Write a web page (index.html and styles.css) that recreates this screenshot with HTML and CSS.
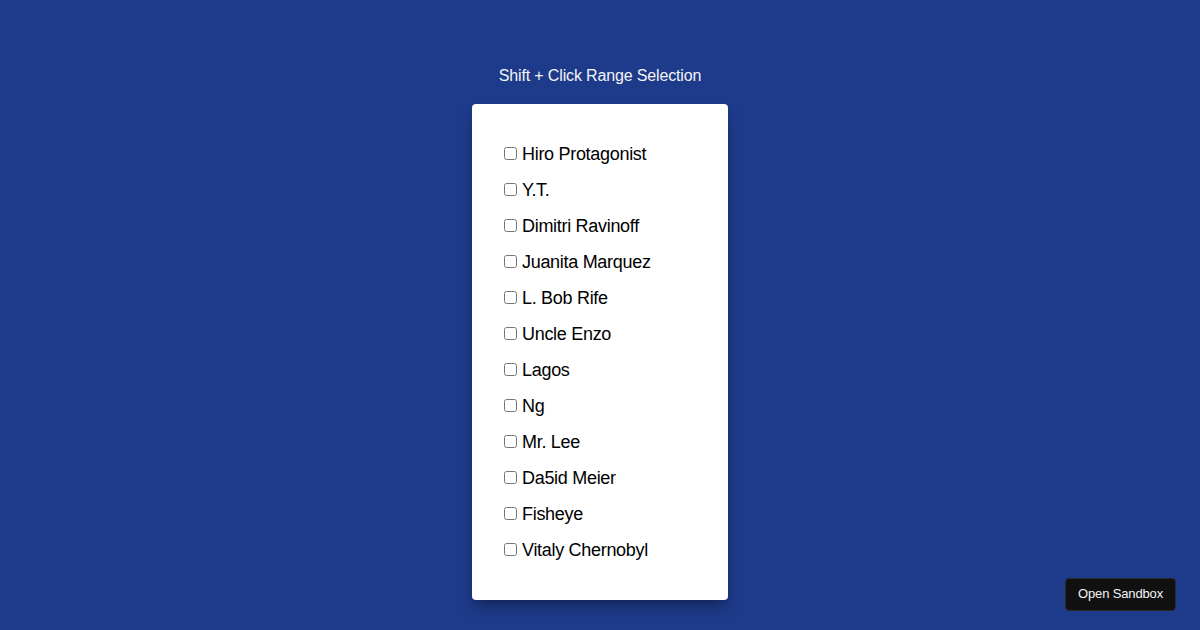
FILE: index.html
```html
<!DOCTYPE html>
<html lang="en">
<head>
<meta charset="utf-8">
<title>Shift + Click Range Selection</title>
<link rel="stylesheet" href="styles.css">
</head>
<body>
<main class="page">
  <h1 class="title">Shift + Click Range Selection</h1>
  <div class="card">
    <label class="item"><input type="checkbox" class="box">Hiro Protagonist</label>
    <label class="item"><input type="checkbox" class="box">Y.T.</label>
    <label class="item"><input type="checkbox" class="box">Dimitri Ravinoff</label>
    <label class="item"><input type="checkbox" class="box">Juanita Marquez</label>
    <label class="item"><input type="checkbox" class="box">L. Bob Rife</label>
    <label class="item"><input type="checkbox" class="box">Uncle Enzo</label>
    <label class="item"><input type="checkbox" class="box">Lagos</label>
    <label class="item"><input type="checkbox" class="box">Ng</label>
    <label class="item"><input type="checkbox" class="box">Mr. Lee</label>
    <label class="item"><input type="checkbox" class="box">Da5id Meier</label>
    <label class="item"><input type="checkbox" class="box">Fisheye</label>
    <label class="item"><input type="checkbox" class="box">Vitaly Chernobyl</label>
  </div>
</main>
<a class="sandbox" href="#">Open Sandbox</a>
</body>
</html>
```
FILE: styles.css
```css
html, body {
  margin: 0;
  padding: 0;
  height: 100%;
}
body {
  background: #1e3a8a;
  font-family: "Liberation Sans", Arial, sans-serif;
  overflow: hidden;
}
.page {
  display: flex;
  flex-direction: column;
  align-items: center;
  padding-top: 64px;
}
.title {
  margin: 0 0 16px;
  font-size: 16px;
  line-height: 24px;
  font-weight: 400;
  letter-spacing: -0.15px;
  color: #f3f4f6;
}
.card {
  background: #fff;
  width: 256px;
  box-sizing: border-box;
  padding: 32px;
  border-radius: 4px;
  box-shadow: 0 10px 15px -3px rgba(0,0,0,0.25), 0 4px 6px -2px rgba(0,0,0,0.15);
  display: flex;
  flex-direction: column;
}
.item {
  display: flex;
  align-items: center;
  height: 36px;
  font-size: 18px;
  letter-spacing: -0.3px;
  color: #000;
}
.box {
  margin: -2px 5px 0 0;
  width: 13px;
  height: 13px;
}
.sandbox {
  position: fixed;
  right: 24px;
  bottom: 19px;
  background: #111;
  color: #f3f4f6;
  font-size: 13px;
  line-height: 16px;
  letter-spacing: -0.15px;
  padding: 7px 12px 8px;
  border-radius: 4px;
  border: 1px solid #2a2a2a;
  text-decoration: none;
}
```
